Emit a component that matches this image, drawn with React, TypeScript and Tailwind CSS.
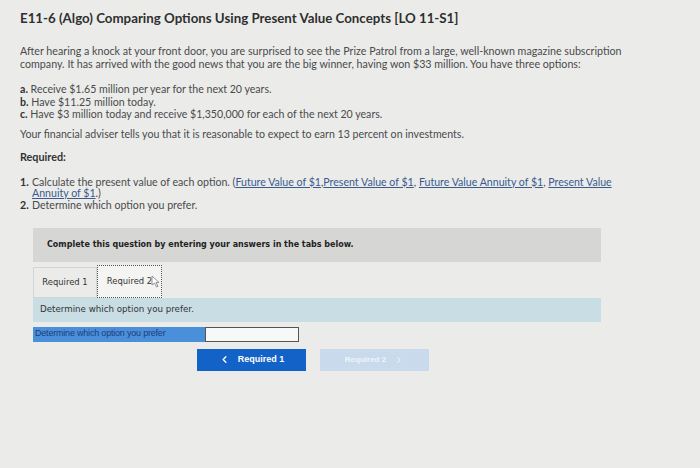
import { ChevronLeft, ChevronRight } from "lucide-react";

const body = { fontFamily: "Lato, 'Open Sans', sans-serif" };
const verdana = { fontFamily: "'DejaVu Sans', Verdana, sans-serif" };
const arial = { fontFamily: "'Liberation Sans', Arial, sans-serif" };

function Link({ children }: { children: React.ReactNode }) {
  return <span className="text-[#3a5a8e] underline underline-offset-1">{children}</span>;
}

export default function App() {
  return (
    <div className="w-[700px] h-[468px] bg-[#ebecea] text-[#4a4a4a] overflow-hidden" style={body}>
      <div className="pl-[20px] pt-[9px]">
        <h1 className="text-[13.3px] font-bold text-[#2f2f2f] leading-[18px]">
          E11-6 (Algo) Comparing Options Using Present Value Concepts [LO 11-S1]
        </h1>

        <p className="mt-[18px] text-[10.7px] leading-[12.5px] w-[610px]">
          After hearing a knock at your front door, you are surprised to see the Prize Patrol from a large, well-known magazine subscription
          company. It has arrived with the good news that you are the big winner, having won $33 million. You have three options:
        </p>

        <div className="mt-[13px] text-[10.6px] leading-[12.5px]">
          <div><b className="text-[#333]">a.</b> Receive $1.65 million per year for the next 20 years.</div>
          <div><b className="text-[#333]">b.</b> Have $11.25 million today.</div>
          <div><b className="text-[#333]">c.</b> Have $3 million today and receive $1,350,000 for each of the next 20 years.</div>
        </div>

        <p className="mt-[7px] text-[10.6px] leading-[12.5px]">
          Your financial adviser tells you that it is reasonable to expect to earn 13 percent on investments.
        </p>

        <p className="mt-[11px] text-[10.8px] font-bold text-[#333] leading-[12.5px]">Required:</p>

        <div className="mt-[13px] text-[10.6px] leading-[11.7px]">
          <div className="flex">
            <b className="w-[12px] text-[#333]">1.</b>
            <div className="w-[590px]">
              Calculate the present value of each option. (<Link>Future Value of $1</Link>,<Link>Present Value of $1</Link>,{" "}
              <Link>Future Value Annuity of $1</Link>, <Link>Present Value Annuity of $1</Link>.)
            </div>
          </div>
          <div className="flex">
            <b className="w-[12px] text-[#333]">2.</b>
            <div>Determine which option you prefer.</div>
          </div>
        </div>
      </div>

      <div className="ml-[33px] mt-[16px] w-[568px]">
        <div className="h-[34px] bg-[#d6d7d5] flex items-center pl-[14px] text-[8px] font-bold text-[#222]" style={verdana}>
          Complete this question by entering your answers in the tabs below.
        </div>

        <div className="mt-[3px] flex items-end h-[33px]" style={verdana}>
          <div className="h-[31px] w-[64px] border border-[#d4d4d4] bg-[#ebebea] flex items-center justify-center text-[8.4px] text-[#333]">
            Required 1
          </div>
          <div className="relative h-[33px] w-[65px] border border-dotted border-[#555] bg-[#f4f4f3] flex items-center justify-center text-[8.4px] text-[#333]">
            Required 2
            <svg className="absolute left-[53px] top-[9px]" width="9" height="13" viewBox="0 0 9 13">
              <path d="M1 1 L1 10 L3.5 8 L5.5 12 L7 11.3 L5 7.5 L8 7.5 Z" fill="#fff" stroke="#777" strokeWidth="0.8" />
            </svg>
          </div>
        </div>

        <div className="h-[24px] bg-[#c9dde5] flex items-center pl-[7px] text-[8.7px] text-[#333]" style={verdana}>
          Determine which option you prefer.
        </div>

        <div className="mt-[5px] flex h-[15px]" style={arial}>
          <div className="w-[172px] bg-[#4a8fd9] text-[#1d3d80] text-[9px] flex items-center pl-[2px] tracking-[-0.2px]">
            Determine which option you prefer
          </div>
          <div className="w-[94px] border border-[#555] bg-[#f7f8f8]"></div>
        </div>

        <div className="mt-[7px] flex gap-[14px] pl-[164px]" style={arial}>
          <div className="w-[109px] h-[22px] bg-[#1362c7] text-white text-[9px] font-bold flex items-center justify-center gap-[8px]">
            <ChevronLeft size={11} strokeWidth={3} />
            <span>Required 1</span>
          </div>
          <div className="w-[109px] h-[22px] bg-[#c8daec] text-[#eef4fa] text-[8px] font-bold flex items-center justify-center gap-[8px]">
            <span>Required 2</span>
            <ChevronRight size={10} strokeWidth={2.5} />
          </div>
        </div>
      </div>
    </div>
  );
}
